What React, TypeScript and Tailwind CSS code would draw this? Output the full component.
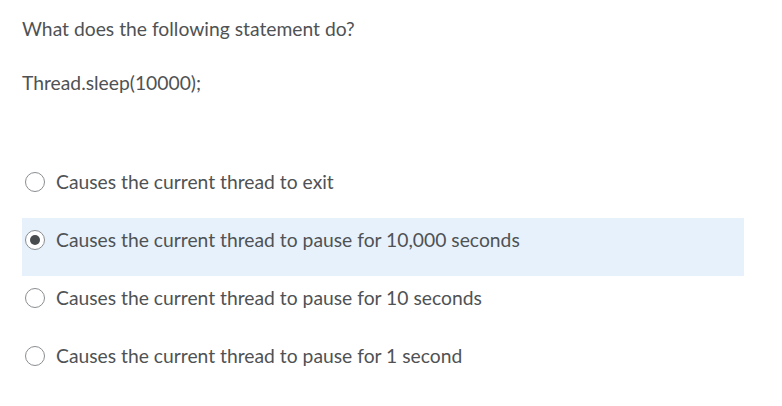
import React from 'react';

const options = [
  'Causes the current thread to exit',
  'Causes the current thread to pause for 10,000 seconds',
  'Causes the current thread to pause for 10 seconds',
  'Causes the current thread to pause for 1 second',
];

const Radio = ({ checked }: { checked: boolean }) => (
  <span className="flex h-[20px] w-[20px] shrink-0 items-center justify-center rounded-full border border-[#8a8e91] bg-white">
    {checked && <span className="h-[10px] w-[10px] rounded-full bg-[#494c4e]" />}
  </span>
);

const App = () => {
  const selected = 1;
  return (
    <div className="min-h-screen bg-white px-[22px] pt-[17px] text-[19.3px] text-[#4f5254]" style={{ fontFamily: 'Lato, "Open Sans", sans-serif' }}>
      <p className="leading-6">What does the following statement do?</p>
      <p className="mt-[30px] leading-6">Thread.sleep(10000);</p>
      <div className="mt-[65px] w-[722px]">
        {options.map((o, i) => (
          <div key={i} className={`flex h-[58px] items-start pl-[3px] pt-[12px] ${i === selected ? 'bg-[#e7f1fb]' : ''}`}>
            <div className="flex items-center gap-[11px]">
              <Radio checked={i === selected} />
              <span className="leading-5">{o}</span>
            </div>
          </div>
        ))}
      </div>
    </div>
  );
};

export default App;
